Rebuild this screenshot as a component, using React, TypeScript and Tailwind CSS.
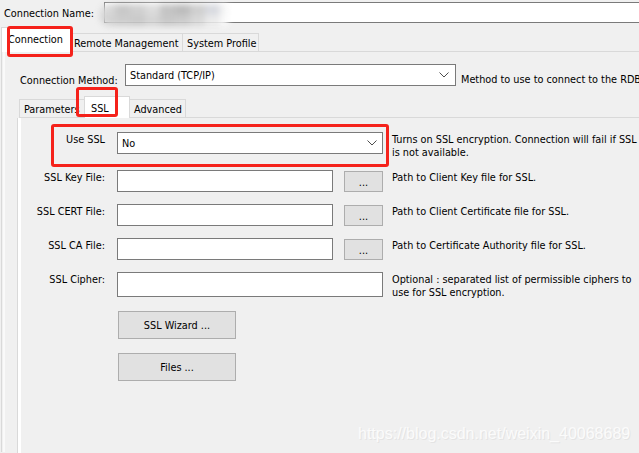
import React from "react";

function Chevron() {
  return (
    <svg width="10" height="6" viewBox="0 0 10 6" className="block shrink-0">
      <path d="M0.5 0.5 L5 5 L9.5 0.5" fill="none" stroke="#4d4d4d" strokeWidth="1" />
    </svg>
  );
}

const mosaicTop = [
  "bg-[#d8d8d8]",
  "bg-[#c8c8c8]",
  "bg-[#d0d0d0]",
  "bg-[#dcdcdc]",
  "bg-[#c4c4c4]",
  "bg-[#bcbcbc]",
  "bg-[#cfcfcf]",
  "bg-[#d8dae0]",
  "bg-[#f6f6f6]",
];
const mosaicBottom = [
  "bg-[#d2d2d2]",
  "bg-[#cdcdcd]",
  "bg-[#cacaca]",
  "bg-[#d4d4d4]",
  "bg-[#c8c8c8]",
  "bg-[#cccccc]",
  "bg-[#d8d8d8]",
  "bg-[#ebebeb]",
  "bg-[#fafafa]",
];

function Label({ children }: { children: React.ReactNode }) {
  return <div className="shrink-0 w-[84px] text-right leading-[13px] mt-[1px] whitespace-nowrap">{children}</div>;
}

function Desc({ children }: { children: React.ReactNode }) {
  return <div className="leading-[13px] mt-[1px] whitespace-nowrap">{children}</div>;
}

function FileRow({ label, desc }: { label: string; desc: string }) {
  return (
    <div className="flex items-start h-[22px] mt-[12px]">
      <Label>{label}</Label>
      <div className="shrink-0 ml-[12px] w-[216px] h-[22px] border border-[#7a7a7a] bg-white" />
      <div className="shrink-0 ml-[11px] mt-[1px] w-[39px] h-[21px] border border-[#adadad] bg-[#e1e1e1] flex items-end justify-center pb-[3px] leading-[10px]">
        ...
      </div>
      <div className="shrink-0 ml-[9px]">
        <Desc>{desc}</Desc>
      </div>
    </div>
  );
}

export default function App() {
  return (
    <div className="relative w-[639px] h-[453px] overflow-hidden bg-[#f0f0f0] text-[10.8px] text-black font-['DejaVu_Sans_Condensed','Liberation_Sans',sans-serif]">
      {/* Connection name row */}
      <div className="flex items-start h-[27px]">
        <div className="shrink-0 w-[104px] pl-[4px] pt-[7px] leading-[13px] whitespace-nowrap">Connection Name:</div>
        <div className="relative mt-[2px] h-[21px] flex-1 border border-r-0 border-[#7a7a7a] bg-white">
          <div className="absolute -left-[5px] top-[1px] w-[128px] h-[22px] blur-[3px] flex flex-col rounded-l-[10px] overflow-hidden">
            <div className="flex h-[11px]">
              {mosaicTop.map((c, i) => (
                <div key={i} className={"shrink-0 w-[15px] h-full " + c} />
              ))}
            </div>
            <div className="flex h-[11px]">
              {mosaicBottom.map((c, i) => (
                <div key={i} className={"shrink-0 w-[15px] h-full " + c} />
              ))}
            </div>
          </div>
        </div>
      </div>

      {/* Outer tabs */}
      <div className="flex items-end h-[25px] pl-[1px]">
        <div className="shrink-0 w-[70px] h-[25px] border border-b-0 border-[#d9d9d9] bg-white pl-[6px] pt-[5px] leading-[13px] whitespace-nowrap">
          Connection
        </div>
        <div className="shrink-0 w-[112px] h-[19px] border border-l-0 border-[#d9d9d9] bg-[#f0f0f0] pl-[3px] pt-[3px] leading-[13px] whitespace-nowrap">
          Remote Management
        </div>
        <div className="shrink-0 w-[76px] h-[19px] border border-l-0 border-[#d9d9d9] bg-[#f0f0f0] pl-[4px] pt-[3px] leading-[13px] whitespace-nowrap">
          System Profile
        </div>
        <div className="flex-1 border-b border-[#d9d9d9]" />
      </div>

      {/* Outer panel */}
      <div className="ml-[1px] h-[400px] border-l border-[#d9d9d9]">
        <div className="ml-[1px] h-full border-l-[2px] border-[#f9f9f9] pt-[12px]">
          {/* Connection method */}
          <div className="flex items-start h-[22px]">
            <div className="shrink-0 w-[120px] pl-[15px] pt-[10px] leading-[13px] whitespace-nowrap">Connection Method:</div>
            <div className="shrink-0 w-[331px] h-[22px] border border-[#7a7a7a] bg-white flex items-center justify-between pl-[4px] pr-[6px]">
              <span className="leading-[13px] whitespace-nowrap">Standard (TCP/IP)</span>
              <Chevron />
            </div>
            <div className="shrink-0 ml-[5px] pt-[9px] leading-[13px] whitespace-nowrap">Method to use to connect to the RDBMS</div>
          </div>

          {/* Inner tabs */}
          <div className="mt-[10px] ml-[12px] flex items-end h-[22px] pl-[2px]">
            <div className="shrink-0 w-[65px] h-[19px] border border-r-0 border-[#d9d9d9] bg-[#f0f0f0] pl-[4px] pt-[3px] leading-[13px] whitespace-nowrap overflow-hidden">
              Parameters
            </div>
            <div className="shrink-0 w-[46px] h-[22px] border border-b-0 border-[#d9d9d9] bg-white pl-[6px] pt-[5px] leading-[13px] whitespace-nowrap">
              SSL
            </div>
            <div className="shrink-0 w-[56px] h-[19px] border border-l-0 border-[#d9d9d9] bg-[#f0f0f0] pl-[4px] pt-[3px] leading-[13px] whitespace-nowrap">
              Advanced
            </div>
            <div className="flex-1 border-b border-[#d9d9d9]" />
          </div>

          {/* Inner panel */}
          <div className="ml-[12px] h-[340px] border-l border-[#d9d9d9]">
            <div className="h-full border-l-[3px] border-white pt-[14px]">
              {/* Use SSL */}
              <div className="flex items-start h-[22px]">
                <Label>Use SSL</Label>
                <div className="shrink-0 ml-[12px] w-[266px] h-[22px] border border-[#7a7a7a] bg-white flex items-center justify-between pl-[4px] pr-[5px]">
                  <span className="leading-[13px]">No</span>
                  <Chevron />
                </div>
                <div className="shrink-0 ml-[9px]">
                  <Desc>
                    Turns on SSL encryption. Connection will fail if SSL
                    <br />
                    is not available.
                  </Desc>
                </div>
              </div>

              <div className="h-[4px]" />
              <FileRow label="SSL Key File:" desc="Path to Client Key file for SSL." />
              <FileRow label="SSL CERT File:" desc="Path to Client Certificate file for SSL." />
              <FileRow label="SSL CA File:" desc="Path to Certificate Authority file for SSL." />

              {/* Cipher */}
              <div className="flex items-start h-[25px] mt-[12px]">
                <Label>SSL Cipher:</Label>
                <div className="shrink-0 ml-[12px] w-[266px] h-[25px] border border-[#7a7a7a] bg-white" />
                <div className="shrink-0 ml-[9px]">
                  <Desc>
                    Optional : separated list of permissible ciphers to
                    <br />
                    use for SSL encryption.
                  </Desc>
                </div>
              </div>

              <div className="ml-[97px] mt-[14px] w-[118px] h-[28px] border border-[#adadad] bg-[#e1e1e1] flex items-center justify-center leading-[13px] whitespace-nowrap">
                SSL Wizard ...
              </div>
              <div className="ml-[97px] mt-[14px] w-[118px] h-[28px] border border-[#adadad] bg-[#e1e1e1] flex items-center justify-center leading-[13px] whitespace-nowrap">
                Files ...
              </div>
            </div>
          </div>
        </div>
      </div>

      {/* Red annotation boxes */}
      <div className="absolute left-[7px] top-[26px] w-[66px] h-[31px] border-[3px] border-[#f5221b] rounded-[3px]" />
      <div className="absolute left-[76px] top-[87px] w-[42px] h-[30px] border-[3px] border-[#f5221b] rounded-[3px]" />
      <div className="absolute left-[51px] top-[124px] w-[338px] h-[43px] border-[3px] border-[#f5221b] rounded-[3px]" />

      {/* Watermark */}
      <div className="absolute left-[358px] top-[425px] text-[16px] leading-[18px] whitespace-nowrap text-[#fbfbfb] font-['Liberation_Sans',Arial,sans-serif] [text-shadow:1px_1px_0_#e4e4e4]">
        https://blog.csdn.net/weixin_40068689
      </div>
    </div>
  );
}
